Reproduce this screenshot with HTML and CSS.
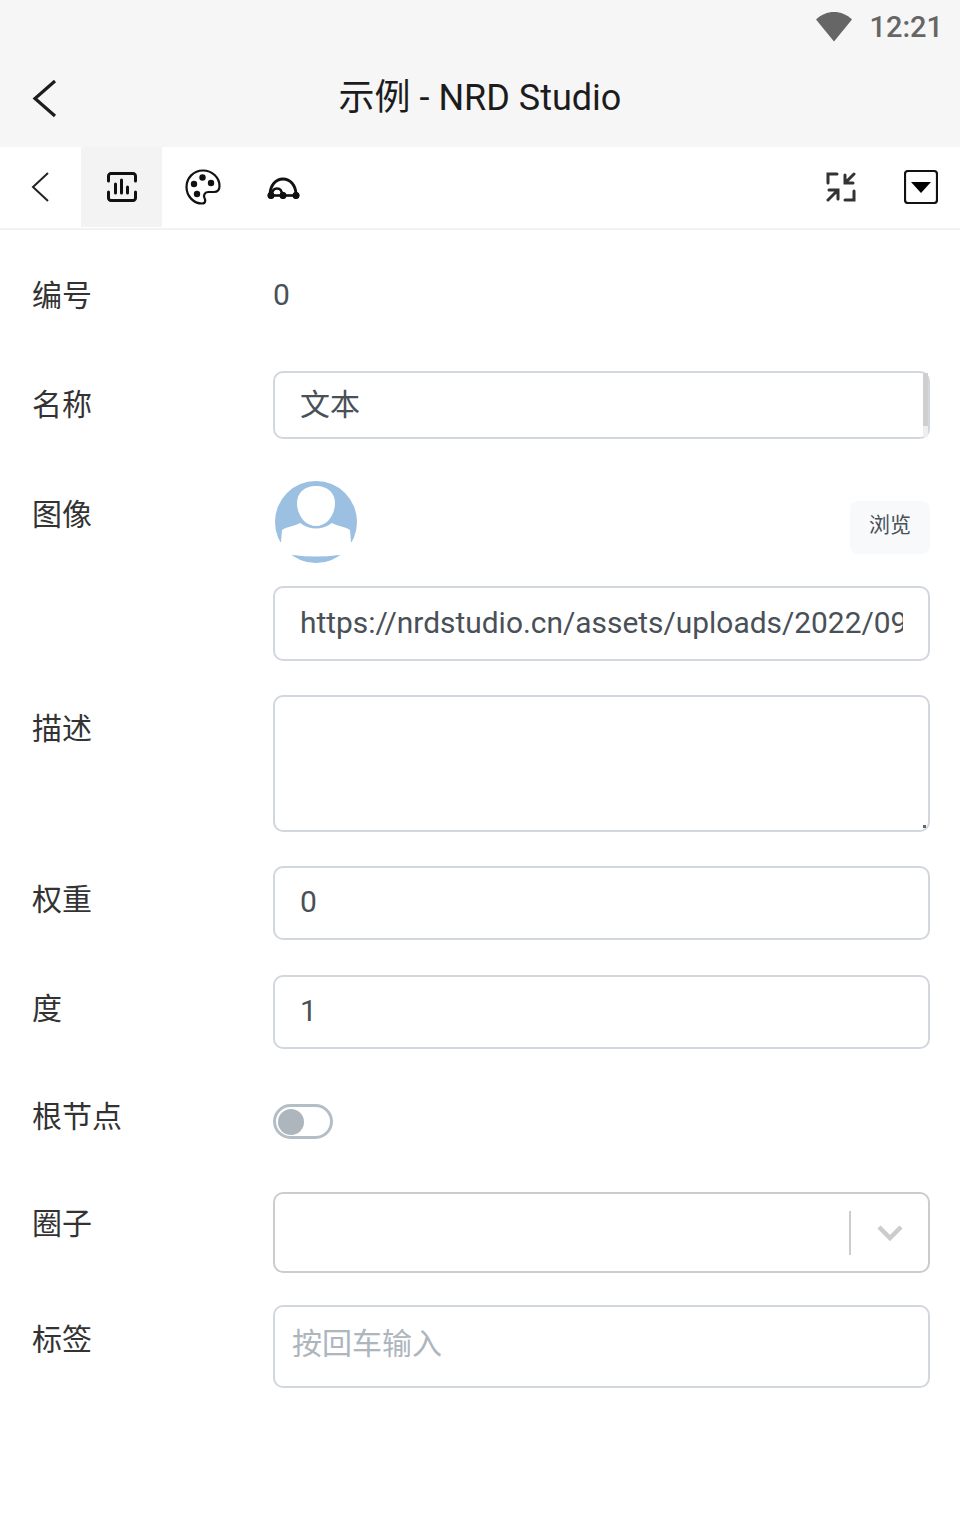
FILE: index.html
```html
<!DOCTYPE html>
<html lang="zh-CN">
<head>
    <meta charset="UTF-8">
    <meta name="viewport" content="width=device-width, initial-scale=1.0">
    <title>示例 - NRD Studio</title>
    <link rel="stylesheet" href="styles.css">
</head>
<body>
    <header class="topbar">
        <div class="status">
            <svg class="wifi" width="38" height="31" viewBox="0 0 38 31"><path d="M1 8.500C11 -1.500 27 -1.500 37 8.500L19 30.500Z" fill="#666"/></svg>
            <span class="time">12:21</span>
        </div>
        <div class="nav">
            <svg class="nav-back" width="26" height="40" viewBox="0 0 26 40"><path d="M23 2L3 19.500L23 37" fill="none" stroke="#1c1c1c" stroke-width="3.200"/></svg>
            <div class="nav-title">示例 - NRD Studio</div>
        </div>
    </header>

    <div class="toolbar">
        <div class="tool">
            <svg width="20" height="32" viewBox="0 0 20 32"><path d="M17 2L2 16L17 30" fill="none" stroke="#222" stroke-width="2"/></svg>
        </div>
        <div class="tool tool-active">
            <svg width="30" height="30" viewBox="0 0 30 30" fill="none" stroke="#111" stroke-width="3" stroke-linecap="round"><path d="M1.500 9V4a2.500 2.500 0 0 1 2.500-2.500H26A2.500 2.500 0 0 1 28.500 4V9M1.500 20V26A2.500 2.500 0 0 0 4 28.500H26A2.500 2.500 0 0 0 28.500 26V20M8.500 12V21M14.500 8V21M20.500 15V21"/></svg>
        </div>
        <div class="tool">
            <svg width="36" height="36" viewBox="0 0 36 36"><path d="M18 1.500C8.500 1.500 1.500 9 1.500 18S8.500 34.500 17 34.500C21 34.500 20.500 31 19.500 29C18 26 20 23 23.500 23H29C32.500 23 34.500 20.500 34.500 17C34.500 8.500 27 1.500 18 1.500Z" fill="none" stroke="#111" stroke-width="2.200"/><circle cx="17.500" cy="8.500" r="3.200" fill="#111"/><circle cx="9" cy="15" r="3.200" fill="#111"/><circle cx="26" cy="14" r="3.200" fill="#111"/><circle cx="12" cy="25" r="3.200" fill="#111"/></svg>
        </div>
        <div class="tool">
            <svg class="tool-car" width="34" height="22" viewBox="0 0 34 22" fill="none" stroke="#111"><path d="M4 18C4 8 10 2 17 2S30 8 30 18" stroke-width="2.800"/><path d="M6 18C6 14 8 11.500 11 11.500S16 14 16 18" stroke-width="2.400"/><path d="M4 18.500H30" stroke-width="2.600"/><circle cx="5" cy="18.500" r="3.200" fill="#111"/><circle cx="17" cy="18.500" r="3.200" fill="#111"/><circle cx="30" cy="18.500" r="3.200" fill="#111"/></svg>
        </div>
        <div class="tool tool-push">
            <svg width="30" height="30" viewBox="0 0 30 30" fill="none" stroke="#333" stroke-width="3" stroke-linecap="round"><path d="M11 2H2V11M19 11L28 2M19 3V11H27M2 28L12 18M3 18H12V27M19 28H28V19"/></svg>
        </div>
        <div class="tool tool-last">
            <svg width="34" height="34" viewBox="0 0 34 34"><rect x="1" y="1" width="32" height="32" rx="3" fill="none" stroke="#111" stroke-width="2.200"/><path d="M7 12H27L17 23Z" fill="#000"/></svg>
        </div>
    </div>

    <main class="form">
        <div class="row row-id">
            <div class="label">编号</div>
            <div class="value">0</div>
        </div>

        <div class="row row-name">
            <div class="label">名称</div>
            <div class="field field-name">文本<span class="scrollbar"></span></div>
        </div>

        <div class="row row-image">
            <div class="label">图像</div>
            <div class="image-box">
                <div class="image-top">
                    <svg width="82" height="82" viewBox="0 0 82 82">
                        <circle cx="41" cy="41" r="41" fill="#9bc0e2"/>
                        <path d="M7 49C11 46 20 45 25 42C30 46 36 47.500 41 47.500S52 46 57 42C62 45 71 46 75 49L76 61L84 62V72L64 74Q41 77 18 74L0 72V62L6 61Z" fill="#fff"/>
                        <path d="M41 5C28 5 22 13 22 22C22 34 30 45 41 45S60 34 60 22C60 13 54 5 41 5Z" fill="#fff"/>
                    </svg>
                    <div class="browse">浏览</div>
                </div>
                <div class="field field-url"><span class="clip">https://nrdstudio.cn/assets/uploads/2022/09</span></div>
            </div>
        </div>

        <div class="row row-desc">
            <div class="label">描述</div>
            <div class="field field-area"><span class="grip"></span></div>
        </div>

        <div class="row row-weight">
            <div class="label">权重</div>
            <div class="field field-num">0</div>
        </div>

        <div class="row row-degree">
            <div class="label">度</div>
            <div class="field field-num">1</div>
        </div>

        <div class="row row-root">
            <div class="label">根节点</div>
            <div class="toggle"><span class="knob"></span></div>
        </div>

        <div class="row row-circle">
            <div class="label">圈子</div>
            <div class="select">
                <span class="select-line"></span>
                <svg class="select-arrow" width="28" height="18" viewBox="0 0 28 18"><path d="M3 3L14 14L25 3" fill="none" stroke="#ccc" stroke-width="4.500"/></svg>
            </div>
        </div>

        <div class="row row-tags">
            <div class="label">标签</div>
            <div class="tags">按回车输入</div>
        </div>
    </main>
</body>
</html>
```

FILE: styles.css
```css
* {
    box-sizing: border-box;
}
body {
    margin: 0;
    background-color: #fff;
    font-family: Roboto, "Noto Sans CJK SC", sans-serif;
    color: #212529;
}
.topbar {
    height: 147px;
    background-color: #f6f6f6;
}
.status {
    display: flex;
    justify-content: flex-end;
    align-items: center;
    gap: 16px;
    height: 54px;
    padding-right: 17px;
}
.wifi {
    margin-top: -2px;
}
.time {
    font-size: 29px;
    font-weight: 500;
    color: #666;
}
.nav {
    position: relative;
    height: 88px;
    display: flex;
    justify-content: center;
    align-items: center;
}
.nav-back {
    position: absolute;
    left: 32px;
    top: 25px;
}
.nav-title {
    font-size: 36px;
    line-height: 88px;
    color: #1c1c1c;
}
.toolbar {
    display: flex;
    height: 83px;
    border-bottom: 2px solid #f2f2f2;
}
.tool {
    width: 81px;
    height: 80px;
    padding-bottom: 1px;
    display: flex;
    justify-content: center;
    align-items: center;
}
.tool-active {
    background-color: #f3f3f3;
}
.tool-car {
    margin: 2px 2px 0 0;
}
.tool-push {
    margin-left: auto;
}
.tool-last {
    width: 79px;
    padding-right: 22px;
    justify-content: flex-end;
}
.form {
    padding: 43px 30px 0 32px;
}
.row {
    display: grid;
    grid-template-columns: 241px minmax(0, 1fr);
    align-items: start;
}
.label {
    font-size: 30px;
    line-height: 44px;
    margin-top: 12px;
    color: #333;
}
.row-id .label {
    margin-top: 1px;
}
.value {
    font-size: 30px;
    line-height: 44px;
    color: #495057;
}
.field {
    position: relative;
    height: 75px;
    padding: 0 25px;
    border: 2px solid #d2d7de;
    border-radius: 10px;
    font-size: 30px;
    line-height: 70px;
    color: #495057;
}
.row-name {
    margin-top: 53px;
}
.field-name {
    height: 68px;
    line-height: 63px;
}
.scrollbar {
    position: absolute;
    top: 0;
    right: 0;
    width: 5px;
    height: 64px;
    background: linear-gradient(#cfcfcf 53px, #eee 53px);
}
.row-image {
    margin-top: 42px;
}
.image-top {
    display: flex;
    justify-content: space-between;
    margin-left: 2px;
    height: 82px;
}
.browse {
    width: 80px;
    height: 53px;
    margin-top: 20px;
    background-color: #f8f9fa;
    border-radius: 8px;
    font-size: 21px;
    line-height: 49px;
    text-align: center;
    color: #495057;
}
.field-url {
    margin-top: 23px;
    font-size: 29.900px;
}
.clip {
    display: block;
    overflow: hidden;
    white-space: nowrap;
}
.row-desc {
    margin-top: 34px;
}
.field-area {
    height: 137px;
}
.grip {
    position: absolute;
    right: 2px;
    bottom: 2px;
    width: 3px;
    height: 3px;
    background-color: #666;
}
.row-weight {
    margin-top: 34px;
}
.field-num {
    height: 74px;
    line-height: 68px;
}
.row-degree {
    margin-top: 35px;
}
.row-root {
    margin-top: 45px;
}
.row-root .label {
    margin-top: 1px;
}
.toggle {
    position: relative;
    width: 60px;
    height: 35px;
    margin-top: 10px;
    border: 3px solid #b4bec7;
    border-radius: 18px;
}
.knob {
    position: absolute;
    left: 2px;
    top: 2px;
    width: 26px;
    height: 26px;
    border-radius: 50%;
    background-color: #adb5bd;
}
.row-circle {
    margin-top: 53px;
}
.row-circle .label {
    margin-top: 10px;
}
.select {
    display: flex;
    align-items: center;
    justify-content: flex-end;
    height: 81px;
    padding-right: 24px;
    border: 2px solid #ccc;
    border-radius: 10px;
}
.select-line {
    width: 2px;
    height: 44px;
    margin-right: 25px;
    background-color: #ccc;
}
.row-tags {
    margin-top: 32px;
}
.row-tags .label {
    margin-top: 13px;
}
.tags {
    height: 83px;
    padding: 0 17px;
    border: 2px solid #d2d7de;
    border-radius: 10px;
    font-size: 30px;
    line-height: 74px;
    color: #adb5bd;
}
```
